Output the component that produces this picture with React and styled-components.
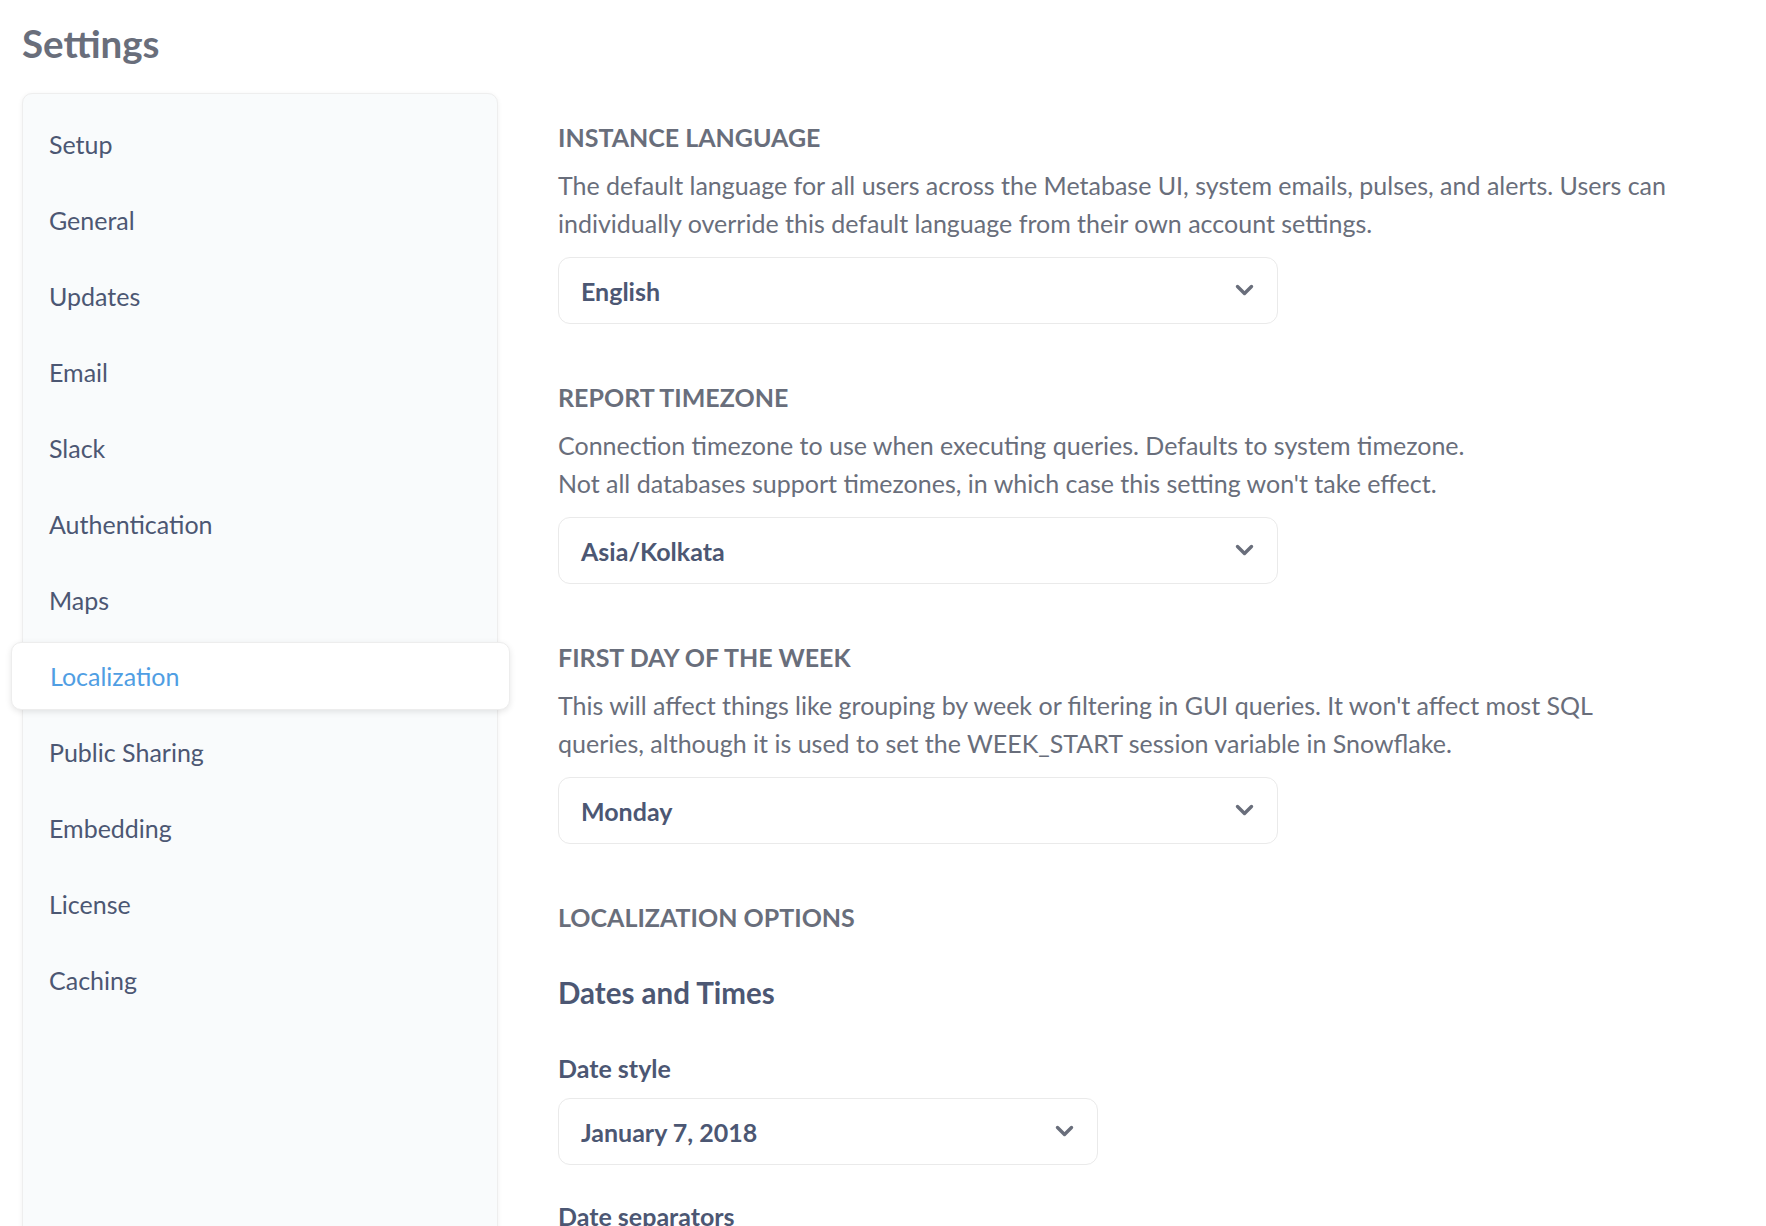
import React from 'react'
import styled, { createGlobalStyle } from 'styled-components'

const GlobalStyle = createGlobalStyle`
  html, body {
    margin: 0;
    padding: 0;
    background: #ffffff;
    font-family: Lato, "Noto Sans", sans-serif;
    -webkit-font-smoothing: antialiased;
  }
`

const Page = styled.div`
  height: 100vh;
  overflow: hidden;
  padding: 21px 0 0 22px;
  box-sizing: border-box;
`

const Title = styled.h1`
  margin: 0;
  font-size: 38.5px;
  line-height: 44px;
  font-weight: 700;
  color: #696e7b;
`

const Layout = styled.div`
  display: flex;
  align-items: flex-start;
  gap: 60px;
  margin-top: 28px;
`

const Sidebar = styled.nav`
  width: 476px;
  min-height: 1300px;
  flex-shrink: 0;
  box-sizing: border-box;
  padding: 16px 0;
  background: #f9fbfc;
  border: 1px solid #eeeeee;
  border-radius: 10px 10px 0 0;
  box-shadow: 0 1px 5px rgba(0, 0, 0, 0.06);
`

const NavItem = styled.a`
  display: flex;
  align-items: center;
  height: 68px;
  margin-bottom: 8px;
  padding-left: 26px;
  box-sizing: border-box;
  font-size: 25px;
  color: ${p => (p.$active ? '#509ee3' : '#4c5773')};
  text-decoration: none;
  cursor: pointer;

  ${p =>
    p.$active &&
    `
    margin-left: -12px;
    margin-right: -13px;
    padding-left: 38px;
    background: #ffffff;
    border: 1px solid #ededed;
    border-radius: 10px;
    box-shadow: 0 2px 6px rgba(0, 0, 0, 0.1);
  `}
`

const Content = styled.main`
  padding-top: 29px;
  width: 1116px;
`

const Section = styled.section`
  padding-bottom: 58px;
`

const SectionHeading = styled.h3`
  margin: 0;
  font-size: 25px;
  line-height: 30px;
  font-weight: 700;
  text-transform: uppercase;
  color: #696e7b;
`

const Description = styled.p`
  margin: 14px 0 0;
  font-size: 25px;
  line-height: 38px;
  color: #696e7b;
`

const SubTitle = styled.h2`
  margin: 43px 0 0;
  font-size: 29.5px;
  line-height: 36px;
  font-weight: 700;
  color: #4c5773;
`

const FieldLabel = styled.div`
  margin-top: ${p => p.$gap || 42}px;
  font-size: 25px;
  line-height: 30px;
  font-weight: 700;
  color: #4c5773;
`

const SelectButton = styled.button`
  display: flex;
  align-items: center;
  justify-content: space-between;
  width: ${p => p.$width}px;
  height: 67px;
  margin-top: 15px;
  padding: 0 23px 0 22px;
  box-sizing: border-box;
  background: #ffffff;
  border: 1px solid #eaeaea;
  border-radius: 12px;
  font-family: inherit;
  font-size: 25px;
  font-weight: 700;
  color: #4c5773;
  cursor: pointer;
`

const Chevron = () => (
  <svg width="19" height="13" viewBox="0 0 19 13" fill="none">
    <path d="M2.5 2.5 L9.5 9.5 L16.5 2.5" stroke="#696e7b" strokeWidth="3.4" strokeLinecap="round" strokeLinejoin="round" />
  </svg>
)

const Select = ({ value, width = 720 }) => (
  <SelectButton $width={width}>
    <span>{value}</span>
    <Chevron />
  </SelectButton>
)

const navItems = [
  'Setup',
  'General',
  'Updates',
  'Email',
  'Slack',
  'Authentication',
  'Maps',
  'Localization',
  'Public Sharing',
  'Embedding',
  'License',
  'Caching',
]

const App = () => {
  return (
    <Page>
      <GlobalStyle />
      <Title>Settings</Title>
      <Layout>
        <Sidebar>
          {navItems.map(item => (
            <NavItem key={item} $active={item === 'Localization'}>
              {item}
            </NavItem>
          ))}
        </Sidebar>
        <Content>
          <Section>
            <SectionHeading>Instance language</SectionHeading>
            <Description>
              The default language for all users across the Metabase UI, system emails, pulses, and alerts. Users can
              individually override this default language from their own account settings.
            </Description>
            <Select value="English" />
          </Section>
          <Section>
            <SectionHeading>Report timezone</SectionHeading>
            <Description>
              Connection timezone to use when executing queries. Defaults to system timezone.
              <br />
              Not all databases support timezones, in which case this setting won't take effect.
            </Description>
            <Select value="Asia/Kolkata" />
          </Section>
          <Section>
            <SectionHeading>First day of the week</SectionHeading>
            <Description>
              This will affect things like grouping by week or filtering in GUI queries. It won't affect most SQL
              queries, although it is used to set the WEEK_START session variable in Snowflake.
            </Description>
            <Select value="Monday" />
          </Section>
          <Section>
            <SectionHeading>Localization options</SectionHeading>
            <SubTitle>Dates and Times</SubTitle>
            <FieldLabel>Date style</FieldLabel>
            <Select value="January 7, 2018" width={540} />
            <FieldLabel $gap={36}>Date separators</FieldLabel>
          </Section>
        </Content>
      </Layout>
    </Page>
  )
}

export default App
